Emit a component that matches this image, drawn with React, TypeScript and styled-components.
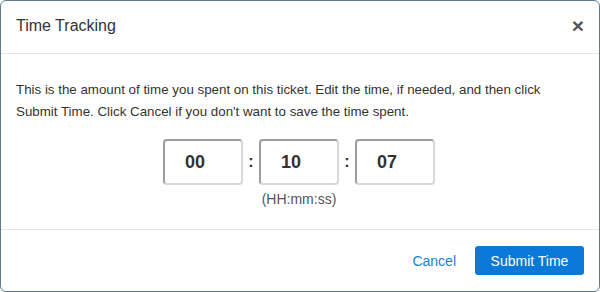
import React, { useState } from "react";
import styled, { createGlobalStyle } from "styled-components";

const Global = createGlobalStyle`
  html, body { margin: 0; padding: 0; background: #ffffff; }
  body { font-family: "Liberation Sans", Arial, sans-serif; }
  * { box-sizing: border-box; }
`;

const Modal = styled.div`
  width: 600px;
  height: 292px;
  border: 1px solid #5f7a90;
  border-radius: 6px;
  background: #fff;
  display: flex;
  flex-direction: column;
  overflow: hidden;
`;

const Header = styled.div`
  height: 53px;
  border-bottom: 1px solid #e5e5e5;
  display: flex;
  align-items: center;
  justify-content: space-between;
  padding: 0 15px 0 15px;
`;

const Title = styled.h4`
  margin: 0;
  font-size: 16px;
  font-weight: normal;
  color: #333;
  padding-bottom: 2px;
`;

const Close = styled.button`
  border: none;
  background: none;
  padding: 0;
  font-family: "Liberation Sans", Arial, sans-serif;
  font-size: 21px;
  font-weight: bold;
  color: #444;
  line-height: 1;
  cursor: pointer;
  opacity: 0.9;
  margin-top: -4px;
`;

const Body = styled.div`
  flex: 1;
  padding: 25px 15px 0 15px;
  border-bottom: 1px solid #e5e5e5;
`;

const Text = styled.p`
  margin: 0;
  font-size: 13.33px;
  line-height: 22px;
  color: #333;
`;

const TimeRow = styled.div`
  display: flex;
  justify-content: center;
  align-items: center;
  margin-top: 16px;
  margin-left: -2px;
`;

const Field = styled.input`
  width: 80px;
  height: 46px;
  border: 2px solid #d8d8d8;
  border-top-color: #9e9e9e;
  border-left-color: #9e9e9e;
  border-radius: 4px;
  font-family: "Liberation Sans", Arial, sans-serif;
  font-size: 18px;
  font-weight: bold;
  color: #333;
  text-align: center;
  padding: 0 16px 0 0;
  outline: none;
`;

const Colon = styled.span`
  width: 16px;
  text-align: center;
  font-size: 16px;
  font-weight: bold;
  color: #333;
`;

const Hint = styled.div`
  text-align: center;
  font-size: 14px;
  color: #555;
  margin-top: 6px;
  margin-left: -2px;
`;

const Footer = styled.div`
  height: 61px;
  display: flex;
  align-items: center;
  justify-content: flex-end;
  padding: 0 15px;
  gap: 19px;
`;

const LinkButton = styled.button`
  border: none;
  background: none;
  padding: 0;
  font-family: "Liberation Sans", Arial, sans-serif;
  font-size: 14px;
  color: #1a7fd4;
  cursor: pointer;
`;

const Primary = styled.button`
  border: none;
  background: #0a78d6;
  color: #fff;
  border-radius: 3px;
  width: 109px;
  height: 29px;
  font-family: "Liberation Sans", Arial, sans-serif;
  font-size: 14px;
  cursor: pointer;
`;

export default function App() {
  const [h, setH] = useState("00");
  const [m, setM] = useState("10");
  const [s, setS] = useState("07");
  return (
    <>
      <Global />
      <Modal>
        <Header>
          <Title>Time Tracking</Title>
          <Close aria-label="Close">×</Close>
        </Header>
        <Body>
          <Text>
            This is the amount of time you spent on this ticket. Edit the time, if needed, and then click
            Submit Time. Click Cancel if you don't want to save the time spent.
          </Text>
          <TimeRow>
            <Field value={h} onChange={(e) => setH(e.target.value)} />
            <Colon>:</Colon>
            <Field value={m} onChange={(e) => setM(e.target.value)} />
            <Colon>:</Colon>
            <Field value={s} onChange={(e) => setS(e.target.value)} />
          </TimeRow>
          <Hint>(HH:mm:ss)</Hint>
        </Body>
        <Footer>
          <LinkButton>Cancel</LinkButton>
          <Primary>Submit Time</Primary>
        </Footer>
      </Modal>
    </>
  );
}
